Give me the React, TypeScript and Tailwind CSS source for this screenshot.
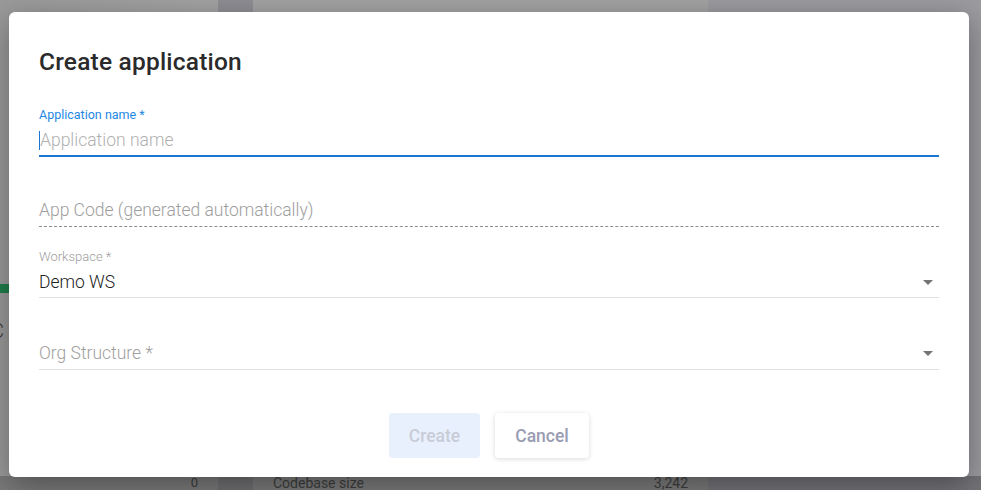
import React from 'react';

function Caret() {
  return (
    <svg width="10" height="5" viewBox="0 0 10 5" className="shrink-0">
      <path d="M0 0 L10 0 L5 5 Z" fill="#757575" />
    </svg>
  );
}

function Backdrop() {
  return (
    <div className="flex h-[490px] w-[981px] bg-[#9d9d9d]">
      {/* left column */}
      <div className="flex w-[218px] flex-col bg-gradient-to-r from-[#9a9a9a] to-[#a3a3a3]">
        <div className="h-[284px]" />
        <div className="h-[9px] w-[12px] bg-[#1f7f4a]" />
        <div className="mt-[26px] h-[24px] text-[20px] font-light leading-[24px] text-[#3a3a3a]">
          <span className="-ml-[9px]">C</span>
        </div>
        <div className="flex-1" />
        <div className="h-[14px] bg-[#7a7a7a] pr-[20px] text-right text-[13px] leading-[14px] text-[#3d3d3d]">0</div>
      </div>
      {/* gutter */}
      <div className="flex w-[35px] flex-col bg-[#8e8e94]">
        <div className="flex-1" />
        <div className="h-[14px] bg-[#6f6f73]" />
      </div>
      {/* middle card */}
      <div className="flex w-[455px] flex-col bg-[#a3a3a3]">
        <div className="flex-1" />
        <div className="flex h-[14px] justify-between bg-[#7a7a7a] px-[20px] text-[14px] leading-[14px] text-[#3d3d3d]">
          <span>Codebase size</span>
          <span>3,242</span>
        </div>
      </div>
      {/* right */}
      <div className="flex flex-1 flex-col bg-[#9b9ba0]">
        <div className="flex-1" />
        <div className="h-[14px] bg-[#737378]" />
      </div>
    </div>
  );
}

export default function App() {
  return (
    <div className="relative h-[490px] w-[981px] overflow-hidden font-['Roboto',sans-serif]">
      <Backdrop />

      <div className="absolute left-[9px] top-[12px] flex h-[465px] w-[960px] flex-col rounded-[6px] bg-white px-[30px] pt-[36px] shadow-[0_8px_30px_rgba(0,0,0,0.35)]">
        <h2 className="h-[28px] text-[24.5px] font-medium leading-[28px] tracking-[0.2px] text-[#2a2a2a]">
          Create application
        </h2>

        {/* Application name (focused) */}
        <div className="mt-[31px] flex flex-col border-b-2 border-[#1976d2]">
          <label className="h-[16px] text-[12.5px] leading-[16px] text-[#1e88e5]">Application name *</label>
          <div className="flex h-[32px] items-center pt-[2px]">
            <span className="h-[19px] w-px bg-[#1976d2]" />
            <span className="text-[17.5px] font-light text-[#b0b0b0]">Application name</span>
          </div>
        </div>

        {/* App Code */}
        <div className="mt-[21px] flex flex-col border-b border-dashed border-[#8c8c8c]">
          <div className="h-[16px]" />
          <div className="flex h-[32px] items-center pt-[1px] text-[17.5px] font-light text-[#9e9e9e]">
            App Code (generated automatically)
          </div>
        </div>

        {/* Workspace */}
        <div className="mt-[22px] flex flex-col border-b border-[#e0e0e0]">
          <label className="h-[16px] text-[13px] font-light leading-[16px] text-[#9e9e9e]">Workspace *</label>
          <div className="flex h-[32px] items-center justify-between pr-[6px] pt-[2px]">
            <span className="text-[17.5px] font-light text-[#212121]">Demo WS</span>
            <Caret />
          </div>
        </div>

        {/* Org Structure */}
        <div className="mt-[23px] flex flex-col border-b border-[#e0e0e0]">
          <div className="h-[16px]" />
          <div className="flex h-[32px] items-center justify-between pr-[6px] pt-[1px]">
            <span className="text-[17.5px] font-light text-[#9e9e9e]">Org Structure *</span>
            <Caret />
          </div>
        </div>

        <div className="mt-[43px] flex justify-center gap-[15px]">
          <button
            type="button"
            className="h-[45px] w-[91px] rounded-[4px] bg-[#e8f0fe] pt-[1px] text-[17.5px] font-medium text-[#c8ccd6]"
          >
            Create
          </button>
          <button
            type="button"
            className="h-[45px] w-[94px] rounded-[4px] bg-white pt-[1px] text-[17.5px] font-medium text-[#9a9cb2] shadow-[0_1px_5px_rgba(0,0,0,0.15)]"
          >
            Cancel
          </button>
        </div>
      </div>
    </div>
  );
}
